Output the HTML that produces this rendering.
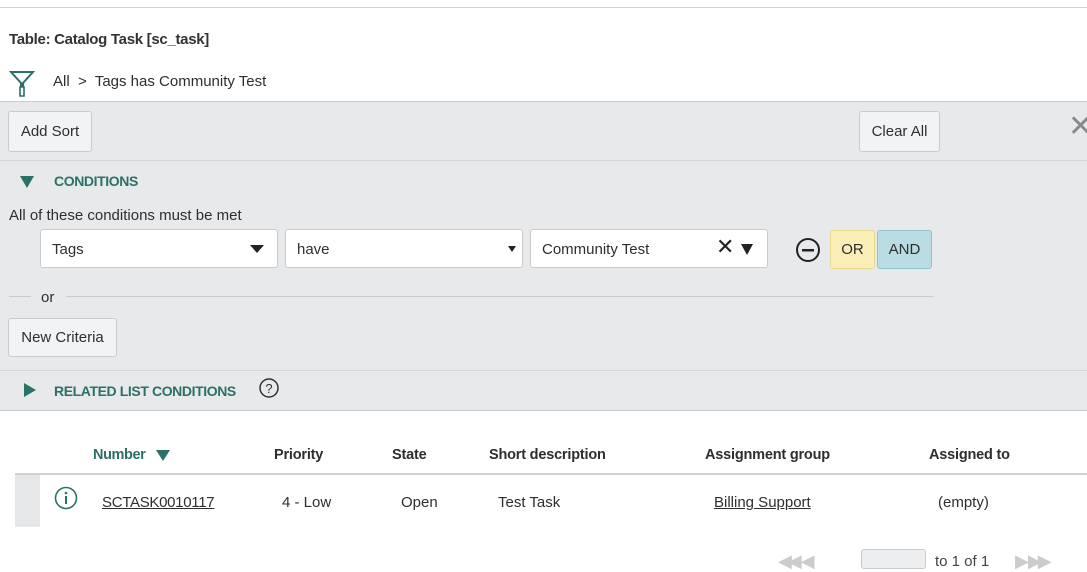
<!DOCTYPE html>
<html><head><style>
*{margin:0;padding:0;box-sizing:border-box}
body{width:1087px;height:560px;overflow:hidden;background:#fff;font-family:"Liberation Sans",sans-serif;color:#2e2e2e;font-size:15px;position:relative}
.a{position:absolute;white-space:nowrap}
.btn{position:absolute;background:#f2f3f4;border:1px solid #c9cbcd;border-radius:3px;font-size:15px;text-align:center;color:#2e2e2e}
.sel{position:absolute;background:#fff;border:1px solid #c9cbcd;border-radius:3px;height:39px;top:229px;font-size:15px;padding:11px 0 0 11px}
.teal{color:#2b7168;font-weight:bold;font-size:14px;letter-spacing:-0.4px}
.h{font-weight:bold;font-size:14.5px;letter-spacing:-0.2px}
</style></head><body>
<div class="a" style="left:0;top:7px;width:1087px;height:1px;background:#cfd1d3"></div>
<div class="a" style="left:9px;top:31px;font-size:15px;font-weight:bold;color:#333;letter-spacing:-0.3px">Table: Catalog Task [sc_task]</div>
<svg class="a" style="left:9px;top:70px" width="26" height="28" viewBox="0 0 26 28"><path d="M2 2H24L14 13V16H12V13Z" fill="none" stroke="#2b7168" stroke-width="2"/><path d="M11 17H15V26H11Z" fill="none" stroke="#2b7168" stroke-width="1.6"/></svg>
<div class="a" style="left:53px;top:73px">All &nbsp;&gt;&nbsp; Tags has Community Test</div>
<div class="a" style="left:0;top:101px;width:1087px;height:310px;background:#e8e9ea;border-top:1px solid #c9cbcd;border-bottom:1px solid #c9cbcd"></div>
<div class="btn" style="left:8px;top:111px;width:84px;height:41px;line-height:39px">Add Sort</div>
<div class="btn" style="left:859px;top:111px;width:81px;height:41px;line-height:39px">Clear All</div>
<div class="a" style="left:1068px;top:112px;font-size:30px;color:#8a8a8a;line-height:30px">✕</div>
<div class="a" style="left:0;top:160px;width:1087px;height:1px;background:#d3d5d7"></div>
<div class="a" style="left:20px;top:176px;width:0;height:0;border-left:7px solid transparent;border-right:7px solid transparent;border-top:12px solid #2b7168"></div>
<div class="a teal" style="left:54px;top:173px">CONDITIONS</div>
<div class="a" style="left:9px;top:207px">All of these conditions must be met</div>
<div class="sel" style="left:40px;width:238px">Tags<span class="a" style="left:209px;top:15px;border-left:7px solid transparent;border-right:7px solid transparent;border-top:8px solid #222"></span></div>
<div class="sel" style="left:285px;width:238px">have<span class="a" style="left:222px;top:16px;border-left:4px solid transparent;border-right:4px solid transparent;border-top:6px solid #222"></span></div>
<div class="sel" style="left:530px;width:238px">Community Test<span class="a" style="left:185px;top:4px;font-size:22px;color:#222">✕</span><span class="a" style="left:210px;top:14px;border-left:6px solid transparent;border-right:6px solid transparent;border-top:11px solid #222"></span></div>
<svg class="a" style="left:795px;top:237px" width="26" height="26"><circle cx="13" cy="13" r="11" fill="none" stroke="#222" stroke-width="2"/><rect x="7" y="12" width="12" height="2.5" fill="#222"/></svg>
<div class="btn" style="left:830px;top:230px;width:45px;height:39px;line-height:37px;background:#fbefb7;border-color:#e6d98d">OR</div>
<div class="btn" style="left:877px;top:230px;width:55px;height:39px;line-height:37px;background:#b9dde2;border-color:#8fc3cb">AND</div>
<div class="a" style="left:9px;top:296px;width:22px;height:1px;background:#c9cbcd"></div>
<div class="a" style="left:41px;top:289px">or</div>
<div class="a" style="left:66px;top:296px;width:867px;height:1px;background:#c9cbcd"></div>
<div class="btn" style="left:8px;top:318px;width:109px;height:39px;line-height:37px">New Criteria</div>
<div class="a" style="left:0;top:370px;width:1087px;height:1px;background:#d3d5d7"></div>
<div class="a" style="left:24px;top:383px;width:0;height:0;border-top:7px solid transparent;border-bottom:7px solid transparent;border-left:12px solid #2b7168"></div>
<div class="a teal" style="left:54px;top:383px">RELATED LIST CONDITIONS</div>
<svg class="a" style="left:259px;top:378px" width="22" height="22"><circle cx="10" cy="10" r="9" fill="none" stroke="#333" stroke-width="1.5"/><text x="10" y="15" font-size="13" text-anchor="middle" font-family="Liberation Sans" fill="#333">?</text></svg>
<div class="a teal" style="left:93px;top:447px;font-size:14.5px">Number</div>
<div class="a" style="left:156px;top:450px;border-left:7px solid transparent;border-right:7px solid transparent;border-top:11px solid #2b7168"></div>
<div class="a h" style="left:274px;top:447px">Priority</div>
<div class="a h" style="left:392px;top:447px">State</div>
<div class="a h" style="left:489px;top:447px">Short description</div>
<div class="a h" style="left:705px;top:447px">Assignment group</div>
<div class="a h" style="left:929px;top:447px">Assigned to</div>
<div class="a" style="left:15px;top:473px;width:1072px;height:2px;background:#cfd1d3"></div>
<div class="a" style="left:15px;top:475px;width:25px;height:52px;background:#e6e7e8"></div>
<svg class="a" style="left:54px;top:486px" width="26" height="26"><circle cx="12" cy="12" r="10.5" fill="none" stroke="#2b7168" stroke-width="1.6"/><rect x="11" y="10" width="2" height="8" fill="#2b7168"/><circle cx="12" cy="7" r="1.3" fill="#2b7168"/></svg>
<div class="a" style="left:102px;top:494px;text-decoration:underline;letter-spacing:-0.3px">SCTASK0010117</div>
<div class="a" style="left:282px;top:494px">4 - Low</div>
<div class="a" style="left:401px;top:494px">Open</div>
<div class="a" style="left:498px;top:494px">Test Task</div>
<div class="a" style="left:714px;top:494px;text-decoration:underline">Billing Support</div>
<div class="a" style="left:938px;top:494px">(empty)</div>
<div class="a" style="left:861px;top:549px;width:65px;height:20px;background:#eceeef;border:1px solid #c9cbcd;border-radius:3px"></div>
<div class="a" style="left:778px;top:551px;color:#ccc;font-size:18px;letter-spacing:-4px">◀◀ &nbsp; ◀</div>
<div class="a" style="left:1015px;top:551px;color:#ccc;font-size:18px;letter-spacing:-4px">▶ &nbsp; ▶▶</div>
<div class="a" style="left:935px;top:553px;color:#444;font-size:15px">to 1 of 1</div>
</body></html>
